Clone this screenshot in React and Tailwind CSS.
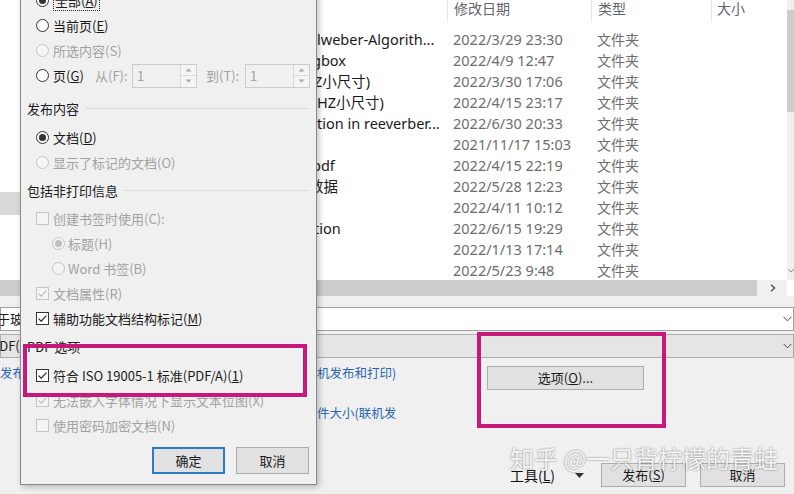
import clsx from "clsx";

const files = [
  { name: "lweber-Algorith...", pad: "pl-[77px]", date: "2022/3/29 23:30" },
  { name: "gbox", pad: "pl-[72px]", date: "2022/4/9 12:47" },
  { name: "Z小尺寸)", pad: "pl-[74px]", date: "2022/3/30 17:06" },
  { name: "HZ小尺寸)", pad: "pl-[77px]", date: "2022/4/15 23:17" },
  { name: "tion in reeverber...", pad: "pl-[77px]", date: "2022/6/30 20:33" },
  { name: "", pad: "pl-[77px]", date: "2021/11/17 15:03" },
  { name: "pdf", pad: "pl-[72px]", date: "2022/4/15 22:19" },
  { name: "数据", pad: "pl-[69px]", date: "2022/5/28 12:23" },
  { name: "", pad: "pl-[77px]", date: "2022/4/11 10:12" },
  { name: "tion", pad: "pl-[74px]", date: "2022/6/15 19:29" },
  { name: "", pad: "pl-[77px]", date: "2022/1/13 17:14" },
  { name: "", pad: "pl-[77px]", date: "2022/5/23 9:48" },
];

function Radio({ checked, disabled }) {
  return (
    <span
      className={clsx(
        "flex h-[13px] w-[13px] shrink-0 items-center justify-center rounded-full border",
        disabled ? "border-[#c6c6c6] bg-[#f4f4f4]" : "border-[#333333] bg-white"
      )}
    >
      {checked && (
        <span
          className={clsx(
            "h-[7px] w-[7px] rounded-full",
            disabled ? "bg-[#c0c0c0]" : "bg-[#333333]"
          )}
        />
      )}
    </span>
  );
}

function Check({ checked, disabled }) {
  return (
    <span
      className={clsx(
        "flex h-[13px] w-[13px] shrink-0 items-center justify-center border",
        disabled ? "border-[#c6c6c6] bg-[#f4f4f4]" : "border-[#333333] bg-white"
      )}
    >
      {checked && (
        <svg width="11" height="11" viewBox="0 0 11 11">
          <path
            d="M1.6 5.6 L4.2 8.2 L9.4 2.6"
            fill="none"
            stroke={disabled ? "#bdbdbd" : "#222222"}
            strokeWidth="1.2"
          />
        </svg>
      )}
    </span>
  );
}

function Option({ kind = "radio", checked, disabled, indent, className, children }) {
  return (
    <div
      className={clsx(
        "flex h-[25px] items-center",
        indent ? "gap-[3px] pl-[31px]" : "gap-[4px] pl-[15px]",
        className
      )}
    >
      {kind === "radio" ? (
        <Radio checked={checked} disabled={disabled} />
      ) : (
        <Check checked={checked} disabled={disabled} />
      )}
      <span className={disabled ? "text-[#a2a2a2]" : "text-[#1a1a1a]"}>{children}</span>
    </div>
  );
}

function Heading({ className, children }) {
  return (
    <div className={clsx("flex h-[25px] items-center gap-[6px] pl-[6px] pr-[6px]", className)}>
      <span className="text-[#1a1a1a]">{children}</span>
      <span className="h-px flex-1 bg-[#dcdcdc]" />
    </div>
  );
}

function Spin() {
  return (
    <div className="flex h-[24px] w-[65px] items-center border border-[#cccccc] bg-[#f0f0f0]">
      <span className="flex-1 pl-[4px] text-[#a2a2a2]">1</span>
      <div className="flex h-full w-[16px] flex-col border-l border-[#dadada] bg-[#f4f4f4]">
        <span className="flex flex-1 items-center justify-center border-b border-[#dadada]">
          <svg width="7" height="4" viewBox="0 0 7 4">
            <path d="M0.5 3.5 L3.5 0.5 L6.5 3.5 Z" fill="#a8a8a8" />
          </svg>
        </span>
        <span className="flex flex-1 items-center justify-center">
          <svg width="7" height="4" viewBox="0 0 7 4">
            <path d="M0.5 0.5 L3.5 3.5 L6.5 0.5 Z" fill="#a8a8a8" />
          </svg>
        </span>
      </div>
    </div>
  );
}

function Chevron() {
  return (
    <svg width="9" height="6" viewBox="0 0 9 6" className="shrink-0">
      <path d="M0.5 0.8 L4.5 4.8 L8.5 0.8" fill="none" stroke="#444444" strokeWidth="1" />
    </svg>
  );
}

function OptionsDialog() {
  return (
    <div className="absolute left-[20px] top-[-13px] w-[297px] border border-[#8a8a8a] bg-[#f0f0f0] pb-[10px] text-[13px] shadow-[2px_2px_6px_rgba(0,0,0,0.25)]">
      <Option checked>
        <span className="border border-dotted border-[#222222] px-px">
          全部(<u>A</u>)
        </span>
      </Option>
      <Option>
        当前页(<u>E</u>)
      </Option>
      <Option disabled>所选内容(S)</Option>
      <div className="flex h-[25px] items-center pl-[15px]">
        <Radio />
        <span className="ml-[4px] w-[42px] text-[#1a1a1a]">
          页(<u>G</u>)
        </span>
        <span className="w-[37px] text-[#a2a2a2]">从(F):</span>
        <Spin />
        <span className="ml-[9px] w-[39px] text-[#a2a2a2]">到(T):</span>
        <Spin />
      </div>

      <Heading className="mt-[8px]">发布内容</Heading>
      <Option checked className="mt-[4px]">
        文档(<u>D</u>)
      </Option>
      <Option disabled>显示了标记的文档(O)</Option>

      <Heading className="mt-[3px]">包括非打印信息</Heading>
      <Option kind="check" disabled className="mt-[3px]">
        创建书签时使用(C):
      </Option>
      <Option checked disabled indent>
        标题(H)
      </Option>
      <Option disabled indent>
        Word 书签(B)
      </Option>
      <Option kind="check" checked disabled>
        文档属性(R)
      </Option>
      <Option kind="check" checked>
        辅助功能文档结构标记(<u>M</u>)
      </Option>

      <Heading className="mt-[3px]">PDF 选项</Heading>
      <Option kind="check" checked className="mt-[4px]">
        符合 ISO 19005-1 标准(PDF/A)(<u>1</u>)
      </Option>
      <Option kind="check" checked disabled>
        无法嵌入字体情况下显示文本位图(X)
      </Option>
      <Option kind="check" disabled>
        使用密码加密文档(N)
      </Option>

      <div className="mt-[9px] flex justify-end gap-[11px] pr-[7px]">
        <button className="flex h-[27px] w-[73px] items-center justify-center border-2 border-[#2a7cc7] bg-[#e1e1e1] text-[#1a1a1a]">
          确定
        </button>
        <button className="flex h-[27px] w-[73px] items-center justify-center border border-[#adadad] bg-[#e1e1e1] text-[#1a1a1a]">
          取消
        </button>
      </div>
    </div>
  );
}

export default function App() {
  return (
    <div className="relative h-[494px] w-[794px] overflow-hidden bg-[#f0f0f0] font-['Noto_Sans_CJK_SC',sans-serif] text-[#1a1a1a]">
      {/* file list */}
      <div className="flex h-[280px]">
        <div className="w-[240px] shrink-0 bg-white">
          <div className="mt-[192px] h-[23px] bg-[#d9d9d9]" />
        </div>
        <div className="flex-1 overflow-hidden bg-white">
          <div className="flex h-[22px] text-[14px] leading-[16px] text-[#5f6670]">
            <div className="w-[207px]" />
            <div className="w-[144px] border-l border-[#e5e5e5] pl-[6px]">修改日期</div>
            <div className="w-[120px] border-l border-[#e5e5e5] pl-[6px]">类型</div>
            <div className="flex-1 border-l border-[#e5e5e5] pl-[5px]">大小</div>
          </div>
          <div className="mt-[7px]">
            {files.map((f) => (
              <div key={f.date} className="flex h-[21px] items-center">
                <div
                  className={clsx(
                    "w-[207px] overflow-hidden whitespace-nowrap font-['Noto_Sans','Noto_Sans_CJK_SC',sans-serif] text-[14.5px] text-[#1a1a1a]",
                    f.pad
                  )}
                >
                  {f.name}
                </div>
                <div className="w-[144px] pl-[6px] font-['Noto_Sans','Noto_Sans_CJK_SC',sans-serif] text-[14.5px] text-[#6d6d6d]">
                  {f.date}
                </div>
                <div className="w-[120px] pl-[6px] text-[14px] text-[#6d6d6d]">文件夹</div>
              </div>
            ))}
          </div>
        </div>
        <div className="flex w-[7px] flex-col bg-[#f0f0f0]">
          <div className="h-[10px]" />
          <div className="h-[102px] bg-[#cdcdcd]" />
          <div className="flex-1" />
          <svg width="7" height="6" viewBox="0 0 7 6" className="mb-[6px]">
            <path d="M1 1 L4 4 L7 1" fill="none" stroke="#888888" strokeWidth="1" />
          </svg>
        </div>
      </div>

      {/* horizontal scrollbar */}
      <div className="flex h-[16px]">
        <div className="w-[757px] bg-[#cdcdcd]" />
        <div className="flex w-[30px] items-center justify-center bg-[#f0f0f0] pl-[2px]">
          <svg width="6" height="8" viewBox="0 0 6 8">
            <path d="M1 0.8 L4.6 4 L1 7.2" fill="none" stroke="#555555" strokeWidth="1.4" />
          </svg>
        </div>
        <div className="flex-1 bg-white" />
      </div>

      {/* file name / type */}
      <div className="mt-[11px] flex h-[24px] items-center justify-between border border-[#a0a0a0] bg-white pr-[1px] text-[13px]">
        <span className="ml-[-4px]">于玻璃</span>
        <Chevron />
      </div>
      <div className="mt-[3px] flex h-[24px] items-center justify-between border border-[#adadad] bg-[#e5e5e5] pr-[1px] text-[13px]">
        <span className="ml-[-10px]">PDF(*.pdf)</span>
        <Chevron />
      </div>

      {/* optimise + options */}
      <div className="flex h-[105px] text-[12.5px] text-[#2a66b5]">
        <div className="w-[240px] pt-[5px]">
          <span className="leading-[20px]">发布后</span>
        </div>
        <div className="w-[238px] pl-[77px] pt-[5px] leading-[20px]">
          <div>机发布和打印)</div>
          <div className="mt-[20px]">件大小(联机发</div>
        </div>
        <div className="ml-[9px] pt-[8px]">
          <button className="flex h-[24px] w-[157px] items-center justify-center border border-[#adadad] bg-[#e1e1e1] text-[13px] text-[#1a1a1a]">
            选项(<u>O</u>)...
          </button>
        </div>
      </div>

      {/* bottom buttons */}
      <div className="flex items-center justify-end gap-[14px] pr-[9px] text-[13px]">
        <div className="flex w-[77px] items-center">
          <span className="text-[14px] text-[#111111]">
            工具(<u>L</u>)
          </span>
          <svg width="9" height="5" viewBox="0 0 9 5" className="ml-[20px]">
            <path d="M0 0 L9 0 L4.5 5 Z" fill="#333333" />
          </svg>
        </div>
        <button className="flex h-[24px] w-[85px] items-center justify-center border border-[#adadad] bg-[#e1e1e1]">
          发布(<u>S</u>)
        </button>
        <button className="flex h-[24px] w-[85px] items-center justify-center border border-[#adadad] bg-[#e1e1e1]">
          取消
        </button>
      </div>

      <OptionsDialog />

      {/* annotation boxes */}
      <div className="absolute left-[23px] top-[344px] h-[53px] w-[284px] border-[4px] border-[#c8187a]" />
      <div className="absolute left-[477px] top-[332px] h-[96px] w-[189px] border-[4px] border-[#c8187a]" />

      {/* watermark */}
      <div className="pointer-events-none absolute left-[510px] top-[443px] whitespace-nowrap text-[24px] leading-[30px] text-white/90 [text-shadow:0_0_2px_rgba(0,0,0,0.55)]">
        知乎 @一只背柠檬的青蛙
      </div>
    </div>
  );
}
